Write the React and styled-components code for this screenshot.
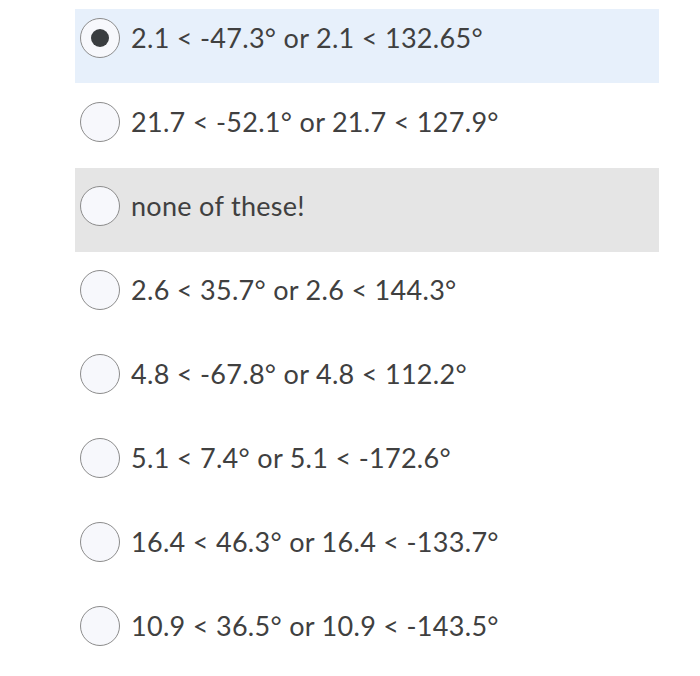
import React from 'react';
import styled, { createGlobalStyle } from 'styled-components';

const GlobalStyle = createGlobalStyle`
  html, body {
    margin: 0;
    padding: 0;
    background: #ffffff;
  }
  body {
    font-family: 'Lato', 'Liberation Sans', sans-serif;
  }
`;

const List = styled.div`
  display: flex;
  flex-direction: column;
  width: 584px;
  margin-left: 75px;
`;

const Row = styled.label`
  display: flex;
  align-items: flex-start;
  height: 84px;
  box-sizing: border-box;
  padding-top: 18px;
  padding-left: 5px;
  gap: 11px;
  cursor: pointer;
  background: ${(props) => props.$bg || 'transparent'};
`;

const Radio = styled.span`
  position: relative;
  flex: 0 0 auto;
  width: 40px;
  height: 40px;
  box-sizing: border-box;
  border-radius: 50%;
  border: 1.5px solid #8c8c8c;
  background: #f7f8fc;

  &::after {
    content: '';
    display: ${(props) => (props.$checked ? 'block' : 'none')};
    position: absolute;
    left: 50%;
    top: 50%;
    width: 18px;
    height: 18px;
    margin: -9px 0 0 -9px;
    border-radius: 50%;
    background: #3a3d40;
  }
`;

const Label = styled.span`
  font-size: 27px;
  line-height: 40px;
  color: #404040;
  letter-spacing: 0.3px;
`;

const options = [
  { text: '2.1 < -47.3° or 2.1 < 132.65°', checked: true, bg: 'linear-gradient(to bottom, #ffffff 9px, #e7f0fb 9px, #e7f0fb 83px, #ffffff 83px)' },
  { text: '21.7 < -52.1° or 21.7 < 127.9°' },
  { text: 'none of these!', bg: '#e5e5e5' },
  { text: '2.6 < 35.7° or 2.6 < 144.3°' },
  { text: '4.8 < -67.8° or 4.8 < 112.2°' },
  { text: '5.1 < 7.4° or 5.1 < -172.6°' },
  { text: '16.4 < 46.3° or 16.4 < -133.7°' },
  { text: '10.9 < 36.5° or 10.9 < -143.5°' },
];

function App() {
  return (
    <>
      <GlobalStyle />
      <List>
        {options.map((o) => (
          <Row key={o.text} $bg={o.bg}>
            <Radio $checked={o.checked} />
            <Label>{o.text}</Label>
          </Row>
        ))}
      </List>
    </>
  );
}

export default App;
